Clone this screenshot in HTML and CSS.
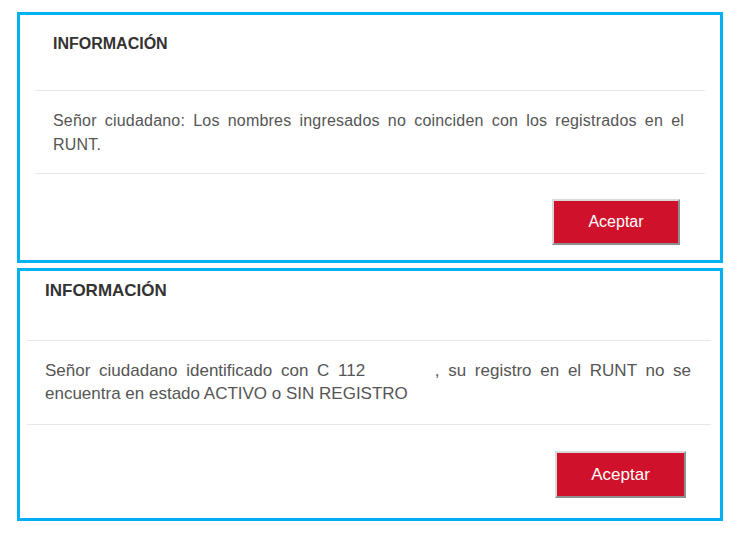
FILE: index.html
```html
<!DOCTYPE html>
<html lang="es">
<head>
<meta charset="utf-8">
<title>Información</title>
<link rel="stylesheet" href="styles.css">
</head>
<body>
<div class="page">
  <section class="panel panel-a">
    <div class="modal">
      <div class="modal-header"><h4 class="modal-title">INFORMACIÓN</h4></div>
      <div class="modal-body"><p class="msg">Señor ciudadano: Los nombres ingresados no coinciden con los registrados en el RUNT.</p></div>
      <div class="modal-footer"><button class="btn">Aceptar</button></div>
    </div>
  </section>
  <section class="panel panel-b">
    <div class="modal">
      <div class="modal-header"><h4 class="modal-title">INFORMACIÓN</h4></div>
      <div class="modal-body"><p class="msg">Señor ciudadano identificado con C 112&nbsp;&nbsp;&nbsp;&nbsp;&nbsp;&nbsp;&nbsp; , su registro en el RUNT no se encuentra en estado ACTIVO o SIN REGISTRO</p></div>
      <div class="modal-footer"><button class="btn">Aceptar</button></div>
    </div>
  </section>
</div>
</body>
</html>
```
FILE: styles.css
```css
html, body {
  margin: 0;
  padding: 0;
  background: #ffffff;
}
body {
  font-family: "Liberation Sans", Arial, sans-serif;
}
.page {
  padding: 12px 0 0 17px;
  display: flex;
  flex-direction: column;
  gap: 5px;
  width: 706px;
}
.panel {
  border: 3px solid #00b0f0;
  background: #fff;
}
.modal {
  display: flex;
  flex-direction: column;
}
.modal-header {
  border-bottom: 1px solid #e8e8e8;
}
.modal-title {
  margin: 0;
  font-weight: bold;
  color: #333;
  line-height: 22px;
}
.modal-body {
  border-bottom: 1px solid #e8e8e8;
}
.msg {
  margin: 0;
  color: #555;
  text-align: justify;
}
.modal-footer {
  display: flex;
  justify-content: flex-end;
}
.btn {
  font-family: "Liberation Sans", Arial, sans-serif;
  background: #d0112b;
  color: #fff;
  border: 2px solid;
  border-color: #d9d9d9 #8f8f8f #8f8f8f #d9d9d9;
  padding: 0;
  cursor: pointer;
}

/* Panel A */
.panel-a .modal { margin: 0 15px; }
.panel-a .modal-header { padding: 18px 18px 35px; }
.panel-a .modal-title { font-size: 16px; }
.panel-a .modal-body { padding: 18px 21px 16px 18px; }
.panel-a .msg { font-size: 16px; line-height: 24px; letter-spacing: 0.2px; }
.panel-a .modal-footer { padding: 25px 25px 15px; }
.panel-a .btn { width: 128px; height: 46px; font-size: 16px; }

/* Panel B */
.panel-b .modal { margin: 0 9px 0 7px; }
.panel-b .modal-header { padding: 9px 18px 38px; }
.panel-b .modal-title { font-size: 17px; }
.panel-b .modal-body { padding: 18px 20px 19px 18px; }
.panel-b .msg { font-size: 17px; line-height: 23px; }
.panel-b .modal-footer { padding: 26px 25px 20px; }
.panel-b .btn { width: 131px; height: 47px; font-size: 17px; }
```
